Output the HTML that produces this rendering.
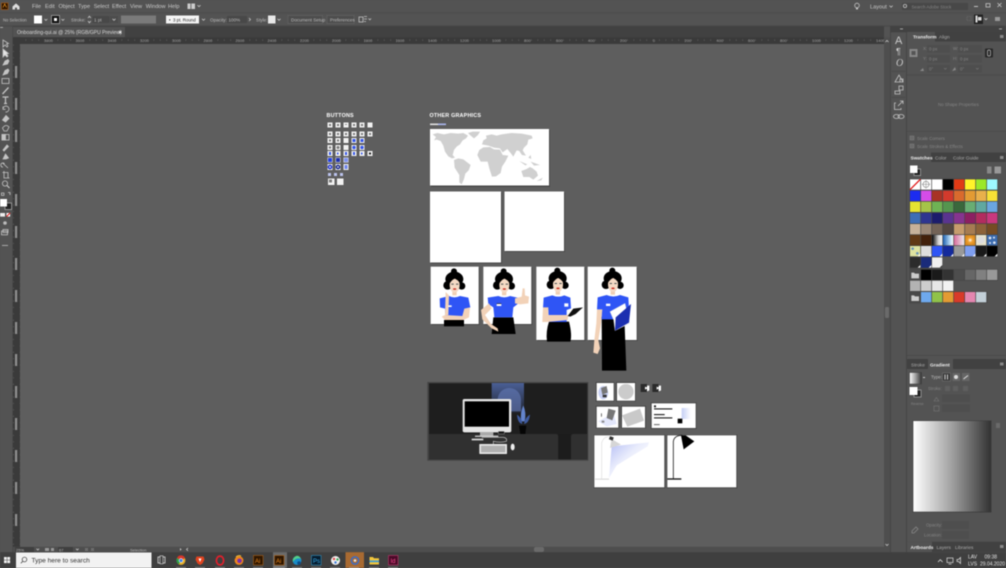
<!DOCTYPE html>
<html lang="en">
<head>
<meta charset="utf-8">
<title>Illustrator</title>
<style>
html,body{margin:0;padding:0;width:1006px;height:568px;overflow:hidden;background:#535353}
svg{display:block;position:absolute;left:0;top:0;filter:blur(.4px)}
text{font-family:"Liberation Sans",sans-serif}
.m{font-size:5.6px;fill:#c9c9c9}
.c{font-size:4.6px;fill:#bdbdbd}
.d{font-size:4.4px;fill:#858585}
.r{font-size:4px;fill:#a0a0a0}
.t{font-size:4.8px;fill:#aaa}
.ta{font-size:4.8px;fill:#eee;font-weight:bold}
.h{font-size:5.4px;fill:#fff;font-weight:bold;letter-spacing:.2px}
.i{fill:none;stroke:#c4c4c4;stroke-width:.8}
</style>
</head>
<body>
<svg width="1006" height="568" viewBox="0 0 1006 568" xmlns="http://www.w3.org/2000/svg">
<defs>
<pattern id="tk" width="6.4" height="6.8" patternUnits="userSpaceOnUse"><rect x="0" y="5.4" width=".5" height="1.4" fill="#6e6e6e"/></pattern>
<pattern id="vk" width="7" height="6.4" patternUnits="userSpaceOnUse"><rect x="5.6" y="0" width="1.4" height=".5" fill="#6e6e6e"/></pattern>
<linearGradient id="gr" x1="0" x2="1" y1="0" y2="0"><stop offset="0" stop-color="#fff"/><stop offset=".5" stop-color="#a0a0a0"/><stop offset="1" stop-color="#333"/></linearGradient>
<linearGradient id="bw" x1="0" x2="1" y1="0" y2="0"><stop offset="0" stop-color="#000"/><stop offset=".6" stop-color="#ccc"/><stop offset="1" stop-color="#fff"/></linearGradient>
<linearGradient id="bl" x1="0" x2="1" y1="0" y2="0"><stop offset="0" stop-color="#1c5fae"/><stop offset=".6" stop-color="#a6cdee"/><stop offset="1" stop-color="#fff"/></linearGradient>
<linearGradient id="pk" x1="0" x2="1" y1="0" y2="0"><stop offset="0" stop-color="#d86a9a"/><stop offset="1" stop-color="#eee"/></linearGradient>
<radialGradient id="or"><stop offset="0" stop-color="#fff"/><stop offset=".45" stop-color="#f0a030"/><stop offset="1" stop-color="#d88a20"/></radialGradient>
<linearGradient id="blu" x1="0" x2="0" y1="0" y2="1"><stop offset="0" stop-color="#4a5f96"/><stop offset="1" stop-color="#20242e"/></linearGradient>
<linearGradient id="beam" x1="0" x2=".75" y1="0" y2=".75"><stop offset="0" stop-color="#b4bdf4"/><stop offset=".55" stop-color="#e9ecfc"/><stop offset="1" stop-color="#fff"/></linearGradient>
<linearGradient id="pb" x1="0" x2="1" y1="0" y2="0"><stop offset="0" stop-color="#c5cff5"/><stop offset="1" stop-color="#fff"/></linearGradient>
<g id="head">
  <circle cx="-1" cy="-34" r="9" fill="#000"/>
  <ellipse cx="0" cy="-11" rx="27" ry="22" fill="#000"/>
  <circle cx="-20" cy="8" r="13" fill="#000"/>
  <circle cx="22" cy="10" r="11" fill="#000"/>
  <rect x="-6" y="20" width="13" height="18" fill="#f0cfb4"/>
  <ellipse cx="1" cy="7" rx="15" ry="23" fill="#f5dac4"/>
  <path d="M-14,2 Q-6,-10 2,-12 Q10,-8 16,0 L16,-16 L-10,-18Z" fill="#000"/>
  <rect x="-9" y="3" width="7" height="3" fill="#4a5252"/><rect x="5" y="3" width="7" height="3" fill="#4a5252"/>
  <ellipse cx="1" cy="19" rx="5" ry="2.4" fill="#c8281c"/>
</g>
<g id="mug"><rect x="0" y="0" width="19" height="24" fill="#2a2a2a"/><path d="M19,5 h7 v14 l-7,3z" fill="#fff"/><path d="M13,8 L22,12 L13,17Z" fill="#fff"/></g>
</defs>

<rect width="1006" height="568" fill="#535353"/>
<rect x="20" y="44" width="864" height="503" fill="#5e5e5e"/>

<!-- menu bar -->
<rect x="0" y="12.5" width="1006" height=".7" fill="#484848"/>
<rect x="1.5" y="3" width="6.5" height="6.5" fill="#2a1400" stroke="#b05a10" stroke-width=".6"/>
<path d="M3,7.5 L4.7,4 L6.5,7.5" fill="none" stroke="#f59a23" stroke-width=".7"/>
<path d="M12.5,6.5 L16,3.4 L19.5,6.5 V9.5 H17 V7.6 H15 V9.5 H12.5Z" fill="#ddd"/>
<text class="m" x="32" y="8">File</text><text class="m" x="45" y="8">Edit</text><text class="m" x="58.5" y="8">Object</text><text class="m" x="78" y="8">Type</text><text class="m" x="93.7" y="8">Select</text><text class="m" x="112" y="8">Effect</text><text class="m" x="130" y="8">View</text><text class="m" x="145.7" y="8">Window</text><text class="m" x="168" y="8">Help</text>
<rect x="187.5" y="3.5" width="7.5" height="5.5" fill="#ccc"/><rect x="190.5" y="3.5" width=".8" height="5.5" fill="#535353"/>
<path d="M197.5,5.2 l1.500,1.500 l1.500,-1.500" class="i"/>
<circle cx="857" cy="5.5" r="2.3" class="i"/><rect x="856" y="8" width="2" height="1.4" fill="#ccc"/>
<text class="m" x="870" y="8.3">Layout</text><path d="M889.5,5.6 l1.6,1.6 l1.6,-1.6" class="i"/>
<rect x="902" y="3" width="66" height="7" fill="#484848"/><circle cx="905" cy="6" r="1.6" class="i"/><text class="d" x="911.500" y="8.300">Search Adobe Stock</text>
<rect x="974" y="6" width="4" height=".9" fill="#ccc"/><rect x="986" y="3.6" width="4" height="3.4" class="i"/><path d="M997.500,3 l4,4 m0,-4 l-4,4" class="i"/>

<!-- control bar -->
<rect x="0" y="25.700" width="1006" height=".7" fill="#424242"/>
<text class="c" x="3" y="21.300" style="font-size:4.200px">No Selection</text>
<rect x="34" y="15.500" width="8" height="8" fill="#fff"/><path d="M44.500,19 l1.400,1.400 l1.400,-1.400" class="i"/>
<rect x="51.500" y="15.500" width="8" height="8" fill="#111" stroke="#ddd" stroke-width=".5"/><rect x="54" y="18" width="3" height="3" fill="#fff"/><path d="M61.500,19 l1.400,1.400 l1.400,-1.400" class="i"/>
<text class="c" x="71" y="21.300">Stroke:</text>
<path d="M88,18 l1.400,-1.800 l1.400,1.800 M88,21 l1.400,1.800 l1.400,-1.800" class="i"/>
<rect x="92.500" y="16" width="17" height="7" fill="#484848"/><text class="c" x="94" y="21.300">1 pt</text>
<rect x="110" y="16" width="8" height="7" fill="#4c4c4c"/><path d="M112.500,18.800 l1.500,1.500 l1.500,-1.500" class="i"/>
<rect x="121" y="15.500" width="35" height="8" fill="#7a7a7a"/>
<rect x="166" y="15.500" width="33" height="8" fill="#f4f4f4"/><text x="169" y="21.300" style="font-size:4.400px;fill:#222">•&#160;&#160;3 pt. Round</text>
<path d="M202,18.800 l1.500,1.500 l1.500,-1.500" class="i"/>
<text class="c" x="210" y="21.300">Opacity:</text>
<rect x="227" y="16" width="20" height="7" fill="#484848"/><text class="c" x="228.500" y="21.300">100%</text>
<path d="M249,18 l1.500,1.500 l-1.500,1.500" class="i"/>
<text class="c" x="256" y="21.300">Style:</text>
<rect x="268" y="15.500" width="7.500" height="8" fill="#e8e8e8"/><path d="M277.500,18.800 l1.500,1.500 l1.500,-1.500" class="i"/>
<rect x="288" y="15.500" width="34.500" height="8" fill="#4d4d4d" stroke="#6a6a6a" stroke-width=".5"/><text class="c" x="291" y="21.300">Document Setup</text>
<rect x="327" y="15.500" width="27" height="8" fill="#4d4d4d" stroke="#6a6a6a" stroke-width=".5"/><text class="c" x="330" y="21.300">Preferences</text>
<rect x="359" y="17" width="4" height="5" class="i"/><path d="M364,16.500 h3 M364,19 h3 M364,21.500 h2" class="i"/><path d="M368.500,18.500 l1.300,1.300 l1.300,-1.300" class="i"/>
<rect x="967" y="16.500" width="4" height="4" fill="none" stroke="#777" stroke-width=".6" stroke-dasharray="1 .8"/>
<rect x="974" y="14.500" width="9" height="9.500" fill="#222"/><rect x="975.500" y="15.500" width="2" height="7" fill="#ddd"/><rect x="978" y="17" width="3.500" height="3.500" fill="#ddd"/>
<path d="M984.500,18.300 l1.400,1.400 l1.400,-1.400" class="i"/>
<rect x="995" y="17" width="5" height="4" fill="#999"/>

<!-- tab bar -->
<rect x="13" y="26.400" width="871" height="10.800" fill="#414141"/>
<rect x="13" y="27" width="112" height="10.200" fill="#535353"/>
<text x="17" y="33.800" style="font-size:5px;fill:#d8d8d8">Onboarding-qui.ai @ 25% (RGB/GPU Preview)</text>
<path d="M119,31 l2.400,2.400 m0,-2.400 l-2.400,2.400" stroke="#eee" stroke-width=".9"/>

<!-- horizontal ruler -->
<rect x="13" y="37.200" width="871" height="6.800" fill="#3a3a3a"/>
<rect x="20" y="37.200" width="864" height="6.800" fill="url(#tk)"/>
<text class="r" x="44" y="42">3800</text><text class="r" x="75.500" y="42">3600</text><text class="r" x="107.500" y="42">3400</text><text class="r" x="140" y="42">3200</text><text class="r" x="172" y="42">3000</text><text class="r" x="203.500" y="42">2800</text><text class="r" x="235.500" y="42">2600</text><text class="r" x="267.500" y="42">2400</text><text class="r" x="300" y="42">2200</text><text class="r" x="332" y="42">2000</text><text class="r" x="363.500" y="42">1800</text><text class="r" x="395.500" y="42">1600</text><text class="r" x="428" y="42">1400</text><text class="r" x="460" y="42">1200</text><text class="r" x="492" y="42">1000</text><text class="r" x="524" y="42">800</text><text class="r" x="556" y="42">600</text><text class="r" x="588" y="42">400</text><text class="r" x="620" y="42">200</text><text class="r" x="652.700" y="42">0</text><text class="r" x="684.500" y="42">200</text><text class="r" x="716.500" y="42">400</text><text class="r" x="748" y="42">600</text><text class="r" x="780" y="42">800</text><text class="r" x="812" y="42">1000</text><text class="r" x="844" y="42">1200</text><text class="r" x="876" y="42">1400</text>
<!-- vertical ruler -->
<rect x="13" y="37.200" width="7" height="510" fill="#3a3a3a"/>
<rect x="13" y="44" width="7" height="503" fill="url(#vk)"/>
<g fill="#8f8f8f"><rect x="15" y="66" width="2.200" height="12"/><rect x="15" y="98" width="2.200" height="12"/><rect x="15" y="130" width="2.200" height="12"/><rect x="15" y="162" width="2.200" height="12"/><rect x="15" y="194" width="2.200" height="12"/><rect x="15" y="226" width="2.200" height="12"/><rect x="15" y="258" width="2.200" height="12"/><rect x="15" y="290" width="2.200" height="12"/><rect x="15" y="322" width="2.200" height="12"/><rect x="15" y="354" width="2.200" height="12"/><rect x="15" y="386" width="2.200" height="12"/><rect x="15" y="418" width="2.200" height="12"/><rect x="15" y="450" width="2.200" height="12"/><rect x="15" y="482" width="2.200" height="12"/><rect x="15" y="514" width="2.200" height="12"/></g>

<!-- left toolbar -->
<rect x="0" y="26.400" width="13" height="526" fill="#535353"/>
<rect x="12.400" y="26.400" width=".6" height="526" fill="#444"/>
<rect x="0" y="27" width="3" height=".8" fill="#bbb"/>
<g class="i">
<path d="M3,40 L3,47 L5,45 L7,47 L8,46 L6.500,44 L8.500,43.500Z"/>
<path d="M3,49 L3,57 L5,55 L7,57 L8,56 L6.500,54 L8.500,53.500Z" fill="#e6e6e6"/>
<path d="M3,65 L5,61 L8,59.500 L9,61 L7.500,64 L3,65Z" fill="#c4c4c4"/>
<path d="M3,75 L5,70.500 L8,69 L9,70.500 L7.500,73.500 L3,75Z" fill="#c4c4c4"/>
<rect x="2" y="78.500" width="7" height="5"/>
<path d="M2.500,94 L8.500,87.500" stroke-width="1.300"/>
<path d="M2.500,97 H8.500 M5.500,97 V103.500 M4,103.500 H7" stroke-width="1.200"/>
<path d="M3,109 A3,3 0 1 1 5.500,112 M3,106.500 V109.300 H5.500"/>
<path d="M2.500,120 L6,115.500 L9,118.500 L5.500,122Z" fill="#c4c4c4"/>
<path d="M2.500,128 Q6,123.500 9,127 L7,131 H4Z"/>
<rect x="2" y="134.500" width="7" height="5.500"/><rect x="2" y="134.500" width="3.500" height="5.500" fill="#c4c4c4"/>
<path d="M3,150 L7,145 L8.500,146.500 L4,151Z" fill="#c4c4c4"/>
<path d="M3,159 L5.500,154 L8.500,158 L6,159Z" fill="#c4c4c4"/>
<path d="M2.500,163 L8,168 M3,167 A2,2 0 1 1 4.500,164"/>
<path d="M4,171 V178 H9.500 M2.500,172.500 H8 V178"/>
<circle cx="5" cy="183.500" r="2.600"/><path d="M7,185.500 L9.500,188" stroke-width="1.200"/>
</g>
<path d="M1.500,193 h2.400 v2.400 h-2.400z" class="i" stroke-width=".6"/>
<path d="M8,192.500 h2 v2.500" class="i"/>
<rect x="5" y="203" width="6.500" height="6.500" fill="#222" stroke="#ddd" stroke-width=".5"/>
<rect x="0" y="199" width="7" height="7.500" fill="#fff"/>
<rect x="0" y="213" width="5" height="3.600" fill="#eee"/><rect x="6.500" y="213" width="3.600" height="3.600" fill="#fff"/><path d="M6.500,216.600 L10.100,213" stroke="#e01818" stroke-width="1"/>
<circle cx="5" cy="223" r="1.800" fill="#bbb"/>
<rect x="1.500" y="231" width="6" height="3.800" class="i"/><rect x="3" y="229.500" width="5" height="3" class="i"/>
<rect x="2" y="245" width="6" height=".9" fill="#b0b0b0"/>

<!-- scrollbars -->
<rect x="884" y="37.200" width="6" height="515" fill="#4e4e4e"/>
<path d="M885.500,42 l1.500,-1.500 l1.500,1.500" class="i" stroke-width=".6"/>
<rect x="885" y="307" width="4" height="11" rx="1.500" fill="#6a6a6a"/>
<path d="M885.500,544 l1.500,1.500 l1.500,-1.500" class="i" stroke-width=".6"/>
<rect x="13" y="546.800" width="877" height="5.500" fill="#4e4e4e"/>
<rect x="534" y="547" width="10" height="5" rx="2" fill="#6a6a6a"/>
<rect x="15" y="547" width="19" height="5" fill="#3f3f3f"/><text x="16" y="551.300" style="font-size:4px;fill:#bbb">25%</text>
<path d="M36.500,548.700 l1.300,1.300 l1.300,-1.300" class="i" stroke-width=".6"/>
<rect x="45" y="548" width="4" height="3" fill="#999"/><rect x="51" y="548" width="3" height="3" fill="#999"/>
<rect x="58" y="547" width="15" height="5" fill="#3f3f3f"/><text x="59" y="551.300" style="font-size:4px;fill:#bbb">67</text>
<path d="M76,548.700 l1.300,1.300 l1.300,-1.300" class="i" stroke-width=".6"/>
<rect x="85" y="548" width="3" height="3" fill="#6d6d6d"/><rect x="91" y="548" width="3" height="3" fill="#6d6d6d"/>
<text x="130" y="551.300" style="font-size:4px;fill:#bbb">Selection</text>
<path d="M180,548 l1.600,1.400 l-1.600,1.400z" fill="#ccc"/><path d="M188,548 l-1.500,1.400 l1.500,1.400" class="i" stroke-width=".5"/>

<!-- BUTTONS -->
<text class="h" x="326.500" y="117">BUTTONS</text>
<g fill="#f2f2f2">
<rect x="327.500" y="122.500" width="5" height="5"/><rect x="335.500" y="122.500" width="5" height="5"/><rect x="343.500" y="122.500" width="5" height="5"/><rect x="351.500" y="122.500" width="5" height="5"/><rect x="359.500" y="122.500" width="5" height="5"/><rect x="367.500" y="122.500" width="5" height="5"/>
<rect x="327.500" y="131.500" width="5" height="5"/><rect x="335.500" y="131.500" width="5" height="5"/><rect x="343.500" y="131.500" width="5" height="5"/><rect x="351.500" y="131.500" width="5" height="5"/><rect x="359.500" y="131.500" width="5" height="5"/><rect x="367.500" y="131.500" width="5" height="5"/>
<rect x="327.500" y="138" width="5" height="5"/><rect x="335.500" y="138" width="5" height="5"/><rect x="343.500" y="138" width="5" height="5"/><rect x="351.500" y="138" width="5" height="5"/><rect x="359.500" y="138" width="5" height="5"/>
<rect x="327.500" y="145" width="5" height="5"/><rect x="335.500" y="145" width="5" height="5"/><rect x="343.500" y="145" width="5" height="5"/><rect x="351.500" y="145" width="5" height="5"/><rect x="359.500" y="145" width="5" height="5"/>
<rect x="327.500" y="151" width="5" height="5"/><rect x="335.500" y="151" width="5" height="5"/><rect x="343.500" y="151" width="5" height="5"/><rect x="351.500" y="151" width="5" height="5"/><rect x="359.500" y="151" width="5" height="5"/><rect x="367.500" y="151" width="5" height="5"/>
<rect x="327.500" y="157.500" width="5" height="5"/><rect x="335.500" y="157.500" width="5" height="5"/><rect x="343.500" y="157.500" width="5" height="5"/>
<rect x="327.500" y="164" width="5" height="6"/><rect x="335.500" y="164" width="5" height="6"/><rect x="343.500" y="164" width="5" height="6"/>
<rect x="328" y="173" width="3" height="3" fill="#bcc4ee"/><rect x="334" y="173" width="3" height="3" fill="#bcc4ee"/><rect x="340" y="173" width="3" height="3" fill="#bcc4ee"/>
<rect x="328" y="178.500" width="6.500" height="6.500"/><rect x="337" y="178.500" width="6.500" height="6.500"/>
</g>
<g fill="#7a7a7a">
<rect x="329" y="124" width="2" height="2"/><rect x="337" y="124" width="2" height="2"/><rect x="345" y="124" width="2" height=".8"/><rect x="353" y="124" width="2" height="2"/><rect x="361" y="124" width="2" height="2"/>
<rect x="329" y="133" width="2" height="2"/><rect x="337" y="133" width="2" height="2"/><rect x="345" y="133" width="2" height="2"/><rect x="353" y="133" width="2" height="2"/><rect x="361" y="133" width="2" height="2"/><rect x="369" y="133" width="2" height="2"/>
<rect x="329" y="139.500" width="2" height="2"/><rect x="337" y="139.500" width="2" height="2"/>
<circle cx="330" cy="147.500" r="1.200"/><circle cx="338" cy="147.500" r="1.500"/>
<rect x="329" y="179.500" width="3" height="3"/>
</g>
<g fill="#3455e8">
<rect x="352.500" y="139" width="3" height="3"/><rect x="360.500" y="139" width="3" height="3"/>
<circle cx="354" cy="147.500" r="1.700"/><circle cx="362" cy="147.500" r="1.700"/>
<rect x="329" y="152" width="2" height="3"/><rect x="337" y="152.500" width="1.500" height="2"/><rect x="345" y="152" width="2" height="3"/><rect x="353" y="152" width="2" height="3"/><rect x="361" y="152.500" width="1.500" height="2"/>
<rect x="328" y="158" width="4" height="4" fill="#2340e0"/><rect x="336" y="158" width="4" height="4" fill="#1c2fb0"/><rect x="344" y="158" width="4" height="4" fill="#7f93ef"/>
<circle cx="330" cy="167" r="2.300" fill="#1c2fcc"/><circle cx="338" cy="167" r="2.300" fill="#101f88"/><rect x="344.500" y="165" width="3" height="4" fill="#6f86ee"/>
</g>
<rect x="369" y="152.500" width="2" height="2" fill="#222"/>
<circle cx="330" cy="167" r=".9" fill="#fff"/><circle cx="338" cy="167" r=".9" fill="#fff"/>

<!-- OTHER GRAPHICS -->
<text class="h" x="429.500" y="117">OTHER GRAPHICS</text>
<rect x="430" y="123.500" width="8" height="1.600" fill="#e0e0e0"/><rect x="438" y="123.500" width="8" height="1.600" fill="#aab6ee"/>

<!-- map + blanks -->
<rect x="431" y="130" width="119" height="57" fill="#3f3f3f" opacity=".7"/>
<rect x="430" y="129" width="119" height="56.500" fill="#fff"/>
<g transform="translate(320,105) scale(.3333)" fill="#d0d0d0">
<path d="M338,88 L352,84 L372,88 L392,84 L415,86 L430,84 L444,92 L438,100 L428,106 L420,118 L410,125 L402,135 L398,150 L405,158 L396,160 L385,154 L375,140 L370,122 L362,108 L350,104 L342,106 L348,96Z"/>
<path d="M444,84 L458,80 L480,80 L474,90 L462,100 L452,92Z"/>
<path d="M402,165 L415,160 L430,163 L452,180 L446,196 L436,206 L432,222 L425,238 L418,232 L418,210 L404,188Z"/>
<path d="M472,150 L478,135 L490,127 L510,126 L522,133 L540,134 L548,150 L565,152 L556,170 L546,185 L542,204 L528,214 L516,215 L508,190 L503,170 L482,170Z"/>
<path d="M486,118 L490,106 L500,100 L498,92 L515,88 L530,92 L545,88 L575,84 L605,86 L635,92 L638,100 L625,104 L622,118 L612,128 L608,136 L618,152 L606,150 L598,138 L590,136 L580,155 L572,144 L562,132 L548,142 L540,130 L522,128 L505,122Z"/>
<path d="M604,198 L620,192 L630,186 L638,190 L650,200 L654,212 L640,224 L628,216 L610,216Z"/>
<path d="M598,168 L622,178 L616,181Z M632,170 L660,180 L642,182Z M535,190 L542,188 L536,205Z M650,228 L668,218 L664,226Z M625,158 L632,150 L634,162Z"/>
</g>
<rect x="431" y="192.500" width="71" height="71" fill="#3f3f3f" opacity=".7"/><rect x="430" y="191.500" width="71" height="71" fill="#fff"/>
<rect x="505.500" y="192.500" width="59.500" height="59.500" fill="#3f3f3f" opacity=".7"/><rect x="504.500" y="191.500" width="59.500" height="59.500" fill="#fff"/>

<!-- characters -->
<g transform="translate(425,260) scale(.33333)">
<g fill="#3f3f3f" opacity=".7"><rect x="20" y="23" width="144" height="172"/><rect x="178" y="23" width="144" height="172"/><rect x="337" y="23" width="144" height="220"/><rect x="491" y="23" width="147" height="220"/></g>
<g fill="#fff"><rect x="17" y="20" width="144" height="172"/><rect x="175" y="20" width="144" height="172"/><rect x="334" y="20" width="144" height="220"/><rect x="488" y="20" width="147" height="220"/></g>
<!-- 1 -->
<rect x="57" y="180" width="60" height="19" fill="#000"/>
<path d="M44,115 L72,108 Q88,116 105,108 L130,113 L136,142 L118,148 L115,168 L60,168 L60,146 L45,142Z" fill="#2f55f5"/>
<path d="M118,146 L135,142 L132,172 L115,180 L60,180 L50,170 L60,165 L112,168Z" fill="#f2d2b8"/>
<path d="M62,96 L72,106 L70,165 L60,165Z" fill="#f2d2b8"/>
<rect x="70" y="136" width="10" height="5" fill="#fff"/>
<use href="#head" x="88" y="68"/>
<!-- 2 -->
<path d="M205,172 H265 L272,222 H200Z" fill="#000"/>
<path d="M188,113 L220,108 Q238,116 255,108 L282,114 L278,132 L265,142 L262,172 H208 L205,142 L190,132Z" fill="#2f55f5"/>
<path d="M192,130 L168,150 L172,178 L200,205 L220,215 L218,205 L198,192 L180,165 L200,145Z" fill="#f2d2b8"/>
<path d="M270,115 L290,110 L293,85 L299,85 L300,106 L312,110 L310,130 L285,133 L270,130Z" fill="#f2d2b8"/>
<rect x="215" y="132" width="14" height="6" fill="#fff"/><rect x="215" y="130" width="14" height="2" fill="#222"/>
<use href="#head" x="237" y="68"/>
<!-- 3 -->
<path d="M372,185 H432 Q442,225 436,245 H366 Q362,215 372,185Z" fill="#000"/>
<path d="M356,113 L382,106 Q400,114 418,106 L436,113 L438,145 L425,150 L425,186 H372 L370,150 L354,145Z" fill="#2f55f5"/>
<path d="M354,142 L370,142 L370,165 L405,165 L430,165 L428,180 L365,186 L352,186Z" fill="#f2d2b8"/>
<path d="M428,168 L445,146 L474,142 L452,162 L436,170Z" fill="#111"/>
<rect x="418" y="130" width="12" height="10" fill="#fff"/>
<use href="#head" x="398" y="66"/>
<!-- 4 -->
<path d="M530,170 H598 L604,332 H531Z" fill="#000"/>
<path d="M518,112 L545,105 Q565,114 585,105 L610,112 L612,145 L590,160 L590,178 L530,178 L530,150 L516,148Z" fill="#2f55f5"/>
<path d="M516,148 L532,148 L528,190 L520,240 L525,265 L518,282 L505,278 L508,240 L514,190Z" fill="#f2d2b8"/>
<path d="M555,155 L600,130 L614,190 L570,212 L566,180Z" fill="#fff" stroke="#ddd"/>
<path d="M572,172 L618,132 L612,188 L570,212Z" fill="#1c2fb0"/>
<rect x="543" y="131" width="13" height="7" fill="#fff"/>
<use href="#head" x="563" y="66"/>
</g>

<!-- desk panel -->
<g transform="translate(425,378) scale(.33333)">
<rect x="7" y="12" width="483" height="236" fill="#434343"/>
<rect x="12" y="16" width="475" height="228" fill="#1e1e1e"/>
<rect x="200" y="15" width="97" height="90" fill="url(#blu)"/>
<path d="M218,100 V65 A35,35 0 0 1 288,65 V100Z" fill="#5e74ae" opacity=".7"/>
<path d="M12,168 H392 Q400,168 400,176 V244 H12Z" fill="#303030"/>
<path d="M438,176 Q438,168 446,168 H487 V244 H438Z" fill="#303030"/>
<rect x="400" y="168" width="38" height="76" fill="#1c1c1c"/>
<path d="M295,82 Q305,105 299,130 H289 Q284,105 295,82Z" fill="#6484cc"/>
<path d="M276,110 Q290,118 292,138 Q278,136 276,110Z M315,110 Q300,118 297,138 Q312,136 315,110Z" fill="#3e5a9e"/>
<path d="M282,143 H304 L301,168 H286Z" fill="#050505"/>
<rect x="113" y="63" width="146" height="100" rx="5" fill="#e6e6e6"/>
<rect x="119" y="70" width="133" height="76" fill="#000"/>
<rect x="165" y="163" width="40" height="12" fill="#aaa"/>
<rect x="150" y="173" width="70" height="3.500" fill="#ddd"/>
<rect x="140" y="182" width="35" height="5" fill="#ddd"/>
<path d="M220,160 H238 V168 H220Z" fill="#111" stroke="#ccc"/>
<path d="M170,178 H235 Q248,180 244,190 Q225,195 205,190 V198" fill="none" stroke="#ccc" stroke-width="2"/>
<rect x="163" y="198" width="83" height="30" rx="2" fill="#e8e8e8"/>
<rect x="168" y="203" width="73" height="20" fill="#b0b0b0"/>
<ellipse cx="263" cy="207" rx="6" ry="10" fill="#eee"/>
<g fill="#3d3d3d" opacity=".7"><rect x="512" y="12" width="56" height="59"/><rect x="573" y="12" width="59" height="59"/><rect x="512" y="83" width="71" height="68"/><rect x="588" y="83" width="75" height="68"/><rect x="677" y="73" width="138" height="80"/><rect x="506" y="170" width="215" height="161"/><rect x="725" y="170" width="212" height="161"/></g>
<g fill="#fff"><rect x="515" y="15" width="51" height="53"/><rect x="576" y="15" width="54" height="53"/><rect x="515" y="86" width="65" height="63"/><rect x="591" y="86" width="69" height="63"/><rect x="680" y="76" width="132" height="74"/><rect x="508" y="172" width="210" height="156"/><rect x="727" y="172" width="207" height="156"/></g>
<ellipse cx="535" cy="44" rx="15" ry="20" fill="#c8d0f4"/>
<path d="M528,30 L545,24 L548,44 L532,50Z" fill="#777"/><rect x="533" y="50" width="12" height="8" fill="#333"/>
<circle cx="603" cy="41" r="23" fill="#cbcbcb"/>
<use href="#mug" x="647" y="18"/><use href="#mug" x="682" y="18"/>
<path d="M520,130 L545,145 L575,138 L565,105 Z" fill="#e3e7fb"/>
<path d="M550,92 L572,98 L562,127 L545,120Z" fill="#777"/>
<rect x="528" y="106" width="2.500" height="10" fill="#555"/><rect x="530" y="128" width="8" height="6" fill="#888"/>
<path d="M591,112 L645,92 L657,128 L607,146 Z" fill="#c9c9c9"/>
<rect x="687" y="82" width="6" height="6" fill="#222"/>
<rect x="687" y="91" width="55" height="3.500" fill="#222"/><rect x="687" y="108" width="32" height="3.500" fill="#222"/><rect x="687" y="118" width="55" height="3.500" fill="#222"/><rect x="687" y="138" width="17" height="3.500" fill="#777"/>
<rect x="770" y="90" width="28" height="33" fill="url(#pb)"/><rect x="758" y="122" width="14" height="14" fill="#000"/>
<!-- lamp 1 -->
<path d="M560,205 L672,193 L668,205 L575,262 L552,300 Z" fill="url(#beam)"/>
<path d="M555,210 L560,183 L588,200 Z" fill="#d6d6d6"/><rect x="553" y="176" width="12" height="10" fill="#333" transform="rotate(20 559 181)"/>
<path d="M530,302 V195 Q535,175 555,176" fill="none" stroke="#ddd" stroke-width="2"/>
<rect x="510" y="302" width="42" height="3" fill="#d5d5d5"/>
<!-- lamp 2 -->
<path d="M745,302 V190 Q748,172 772,172" fill="none" stroke="#222" stroke-width="2.500"/>
<path d="M768,172 L782,172 L808,190 L776,214Z" fill="#000"/>
<rect x="727" y="301" width="42" height="4" fill="#111"/>
</g>

<!-- right dock -->
<rect x="890" y="26.400" width="116" height="526" fill="#535353"/>
<rect x="890" y="26.400" width="1" height="526" fill="#464646"/>
<rect x="906" y="26.400" width="1" height="526" fill="#464646"/>
<rect x="890" y="26.400" width="116" height="6" fill="#424242"/>
<rect x="900" y="28.500" width="3" height=".8" fill="#bbb"/><rect x="999" y="28.500" width="3" height=".8" fill="#bbb"/>
<text x="895" y="44" style="font-size:11px;fill:#ccc">A</text>
<text x="896" y="54.500" style="font-size:9px;fill:#ccc">¶</text>
<text x="896" y="66" style="font-size:10px;fill:#ccc;font-style:italic;font-family:'Liberation Serif',serif">O</text>
<rect x="891.500" y="71" width="14" height=".7" fill="#464646"/>
<path d="M895,82 L899,75 L903,82Z M900,79 h3 v3 h-3z" class="i"/>
<path d="M895,94 h5 v-3 h-5z M899,90 h4 v-4 h-4z" class="i" fill="#aaa"/>
<rect x="891.500" y="97" width="14" height=".7" fill="#464646"/>
<path d="M896,103 h-1.500 v6.500 h6.500 v-1.500 M898,106 L903,101 M900,101 h3 v3" class="i"/>
<ellipse cx="896.500" cy="116.500" rx="3" ry="2" class="i"/><ellipse cx="901" cy="116.500" rx="3" ry="2" class="i"/>

<!-- transform panel -->
<rect x="907" y="32" width="99" height="9.500" fill="#414141"/>
<rect x="907" y="32" width="28" height="9.500" fill="#535353"/>
<text class="ta" x="913" y="38.700">Transform</text><text class="t" x="939" y="38.700">Align</text>
<rect x="1000" y="35" width="3.500" height="3" fill="#888"/>
<rect x="909.500" y="49" width="8" height="8" fill="#888"/><rect x="911.500" y="51" width="4" height="4" fill="#555"/>
<text class="d" x="923" y="50">X:</text><rect x="927" y="45" width="23" height="7.500" fill="#4e4e4e"/><text class="d" x="929" y="50.500">0 px</text>
<text class="d" x="953" y="50">W:</text><rect x="958" y="45" width="24" height="7.500" fill="#4e4e4e"/><text class="d" x="960" y="50.500">0 px</text>
<rect x="985" y="48.500" width="8" height="9" rx="1" fill="#282828"/><rect x="987.500" y="50" width="3" height="6" rx="1.400" fill="none" stroke="#bbb" stroke-width=".7"/>
<text class="d" x="923" y="60">Y:</text><rect x="927" y="55" width="23" height="7.500" fill="#4e4e4e"/><text class="d" x="929" y="60.500">0 px</text>
<text class="d" x="953" y="60">H:</text><rect x="958" y="55" width="24" height="7.500" fill="#4e4e4e"/><text class="d" x="960" y="60.500">0 px</text>
<path d="M920,71 h4 l-1,-3z" fill="#888"/><rect x="927" y="65" width="23" height="7.500" fill="#4e4e4e"/><text class="d" x="929" y="70.500">0°</text><path d="M944,68 l1.300,1.300 l1.300,-1.300" stroke="#777" fill="none" stroke-width=".6"/>
<path d="M952,71 l3,-4 l1,3z" fill="#888"/><rect x="958" y="65" width="24" height="7.500" fill="#4e4e4e"/><text class="d" x="960" y="70.500">0°</text><path d="M976,68 l1.300,1.300 l1.300,-1.300" stroke="#777" fill="none" stroke-width=".6"/>
<rect x="907" y="74.700" width="99" height=".7" fill="#484848"/>
<text class="d" x="938" y="106">No Shape Properties</text>
<rect x="907" y="131" width="99" height=".6" fill="#484848"/>
<rect x="910" y="136" width="4" height="4" fill="#6a6a6a" stroke="#888" stroke-width=".4"/><text class="d" x="917" y="140">Scale Corners</text>
<rect x="910" y="144" width="4" height="4" fill="#6a6a6a" stroke="#888" stroke-width=".4"/><text class="d" x="917" y="148">Scale Strokes &amp; Effects</text>

<!-- swatches panel -->
<rect x="907" y="152.500" width="99" height="9.500" fill="#414141"/>
<rect x="907" y="152.500" width="24" height="9.500" fill="#535353"/>
<text class="ta" x="910.500" y="159.300">Swatches</text><text class="t" x="935" y="159.300">Color</text><text class="t" x="953" y="159.300">Color Guide</text>
<rect x="1000" y="156" width="3.500" height="3" fill="#888"/>
<rect x="914" y="169" width="6.500" height="6.500" fill="#222" stroke="#ddd" stroke-width=".5"/>
<rect x="910" y="165.500" width="7.500" height="7.500" fill="#fff"/>
<rect x="987" y="166.500" width="4.500" height="7" fill="#888"/><rect x="994.500" y="166.500" width="6.500" height="7" fill="#999"/>

<g transform="translate(890,150) scale(.33333)">
<rect x="58" y="86" width="266" height="272" fill="#444"/>
<rect x="60" y="88" width="31" height="31" fill="#fff"/><path d="M60,119 L91,88" stroke="#e01818" stroke-width="4"/>
<rect x="93" y="88" width="31" height="31" fill="#fff"/><circle cx="108" cy="103" r="9" fill="none" stroke="#888" stroke-width="2"/><path d="M95,103 H121 M108,90 V116" stroke="#888" stroke-width="1.500"/>
<rect x="126" y="88" width="31" height="31" fill="#fff"/>
<rect x="159" y="88" width="31" height="31" fill="#000"/>
<rect x="192" y="88" width="31" height="31" fill="#e03a15"/>
<rect x="225" y="88" width="31" height="31" fill="#fff32a"/>
<rect x="258" y="88" width="31" height="31" fill="#9be82a"/>
<rect x="291" y="88" width="31" height="31" fill="#9ef8ff"/>
<rect x="60" y="122" width="31" height="31" fill="#1c2cf0"/><rect x="93" y="122" width="31" height="31" fill="#d54ce8"/><rect x="126" y="122" width="31" height="31" fill="#a83325"/><rect x="159" y="122" width="31" height="31" fill="#d23a2c"/><rect x="192" y="122" width="31" height="31" fill="#d96a2d"/><rect x="225" y="122" width="31" height="31" fill="#e39b33"/><rect x="258" y="122" width="31" height="31" fill="#e9b04b"/><rect x="291" y="122" width="31" height="31" fill="#f7e136"/>
<rect x="60" y="155" width="31" height="31" fill="#e6e232"/><rect x="93" y="155" width="31" height="31" fill="#a6c349"/><rect x="126" y="155" width="31" height="31" fill="#6fb254"/><rect x="159" y="155" width="31" height="31" fill="#55954f"/><rect x="192" y="155" width="31" height="31" fill="#3a683c"/><rect x="225" y="155" width="31" height="31" fill="#68ad73"/><rect x="258" y="155" width="31" height="31" fill="#60a8a0"/><rect x="291" y="155" width="31" height="31" fill="#6aa6e0"/>
<rect x="60" y="189" width="31" height="31" fill="#3e6db5"/><rect x="93" y="189" width="31" height="31" fill="#2e3590"/><rect x="126" y="189" width="31" height="31" fill="#1c1c6c"/><rect x="159" y="189" width="31" height="31" fill="#5a3490"/><rect x="192" y="189" width="31" height="31" fill="#86348f"/><rect x="225" y="189" width="31" height="31" fill="#8c1f62"/><rect x="258" y="189" width="31" height="31" fill="#b22c5f"/><rect x="291" y="189" width="31" height="31" fill="#c9387e"/>
<rect x="60" y="222" width="31" height="31" fill="#c7b299"/><rect x="93" y="222" width="31" height="31" fill="#998675"/><rect x="126" y="222" width="31" height="31" fill="#736357"/><rect x="159" y="222" width="31" height="31" fill="#534741"/><rect x="192" y="222" width="31" height="31" fill="#c69c6d"/><rect x="225" y="222" width="31" height="31" fill="#a67c52"/><rect x="258" y="222" width="31" height="31" fill="#8c6239"/><rect x="291" y="222" width="31" height="31" fill="#754c24"/>
<rect x="60" y="255" width="31" height="31" fill="#603813"/><rect x="93" y="255" width="31" height="31" fill="#42210b"/><rect x="126" y="255" width="31" height="31" fill="url(#bw)"/><rect x="159" y="255" width="31" height="31" fill="url(#bl)"/><rect x="192" y="255" width="31" height="31" fill="url(#pk)"/><rect x="225" y="255" width="31" height="31" fill="url(#or)"/><rect x="258" y="255" width="31" height="31" fill="#e8e4cc"/><circle cx="273" cy="270" r="11" fill="#ddd"/><rect x="291" y="255" width="31" height="31" fill="#3c6cb0"/><circle cx="300" cy="264" r="4" fill="#dfe8f5"/><circle cx="313" cy="278" r="4" fill="#dfe8f5"/><circle cx="312" cy="263" r="3" fill="#dfe8f5"/><circle cx="300" cy="279" r="3" fill="#dfe8f5"/>
<rect x="60" y="288" width="31" height="31" fill="#dfe3a0"/><circle cx="68" cy="296" r="4" fill="#6a94b8"/><circle cx="82" cy="310" r="4" fill="#6a94b8"/><rect x="93" y="288" width="31" height="31" fill="#ddd"/><rect x="126" y="288" width="31" height="31" fill="#2f55f5"/><rect x="159" y="288" width="31" height="31" fill="#142a9c"/><rect x="192" y="288" width="31" height="31" fill="#999"/><rect x="225" y="288" width="31" height="31" fill="#7f9ff0"/><rect x="258" y="288" width="31" height="31" fill="#1a1a1a"/><rect x="291" y="288" width="31" height="31" fill="#000"/>
<rect x="60" y="322" width="31" height="31" fill="#2b2b2b"/><rect x="93" y="322" width="31" height="31" fill="#1a2b7a"/><rect x="126" y="322" width="31" height="31" fill="#f0f0f0"/>
<rect x="158" y="320" width="166" height="38" fill="#535353"/>
<g fill="#fff"><path d="M91,319 l-8,0 l8,-8z M124,319 l-8,0 l8,-8z M157,319 l-8,0 l8,-8z M190,319 l-8,0 l8,-8z M223,319 l-8,0 l8,-8z M256,319 l-8,0 l8,-8z M289,319 l-8,0 l8,-8z M322,319 l-8,0 l8,-8z M91,353 l-8,0 l8,-8z M124,353 l-8,0 l8,-8z"/></g>
<path d="M157,353 l-8,0 l8,-8z" fill="#333"/>
<rect x="58" y="358" width="34" height="34" fill="#484848"/>
<path d="M64,368 h8 l3,3 h12 v14 h-23z" fill="#ccc"/>
<rect x="92" y="358" width="232" height="34" fill="#444"/>
<rect x="93" y="359" width="31" height="31" fill="#000"/><rect x="126" y="359" width="31" height="31" fill="#1a1a1a"/><rect x="159" y="359" width="31" height="31" fill="#333"/><rect x="192" y="359" width="31" height="31" fill="#4d4d4d"/><rect x="225" y="359" width="31" height="31" fill="#666"/><rect x="258" y="359" width="31" height="31" fill="#808080"/><rect x="291" y="359" width="31" height="31" fill="#999"/>
<rect x="58" y="391" width="134" height="34" fill="#444"/>
<rect x="60" y="392" width="31" height="31" fill="#b3b3b3"/><rect x="93" y="392" width="31" height="31" fill="#ccc"/><rect x="126" y="392" width="31" height="31" fill="#e6e6e6"/><rect x="159" y="392" width="31" height="31" fill="#f2f2f2"/>
<rect x="58" y="426" width="34" height="34" fill="#484848"/>
<path d="M64,436 h8 l3,3 h12 v14 h-23z" fill="#ccc"/>
<rect x="92" y="425" width="200" height="34" fill="#444"/>
<rect x="93" y="426" width="31" height="31" fill="#6ea9ee"/><rect x="126" y="426" width="31" height="31" fill="#90c24a"/><rect x="159" y="426" width="31" height="31" fill="#e39b33"/><rect x="192" y="426" width="31" height="31" fill="#d83a2a"/><rect x="225" y="426" width="31" height="31" fill="#e486b0"/><rect x="258" y="426" width="31" height="31" fill="#c3d0d8"/>
</g>
<rect x="907" y="355" width="99" height=".7" fill="#484848"/>

<!-- gradient panel -->
<rect x="907" y="359" width="99" height="10" fill="#414141"/>
<rect x="928" y="359" width="25" height="10" fill="#535353"/>
<text class="t" x="911" y="366.300">Stroke</text><text class="ta" x="930" y="366.300">Gradient</text>
<rect x="1000" y="362.500" width="3.500" height="3" fill="#888"/>
<rect x="909.500" y="372.500" width="12" height="11.500" fill="url(#gr)" stroke="#3a3a3a" stroke-width=".5"/>
<rect x="923" y="377" width="2" height="1" fill="#ccc"/>
<rect x="914" y="390" width="7" height="7" fill="#222" stroke="#ddd" stroke-width=".5"/>
<rect x="909.500" y="387" width="8" height="8" fill="#fff"/>
<text class="c" x="931" y="378.300">Type:</text>
<rect x="942.500" y="373" width="8" height="8" fill="#3a3a3a" stroke="#888" stroke-width=".4"/><rect x="944.500" y="374.500" width="1" height="5" fill="#ccc"/><rect x="947" y="374.500" width="1" height="5" fill="#ccc"/>
<rect x="952.500" y="373" width="7.500" height="8" fill="#666"/><circle cx="956" cy="377" r="2" fill="#ddd"/>
<rect x="962" y="373" width="7.500" height="8" fill="#666"/><path d="M963.500,379 l4.500,-3.500" stroke="#ddd"/>
<text class="d" x="928" y="390">Stroke:</text>
<rect x="945" y="386" width="5" height="5" fill="#5f5f5f"/><rect x="953" y="386" width="5" height="5" fill="#5f5f5f"/><rect x="963" y="386" width="5" height="5" fill="#5f5f5f"/>
<path d="M934,401 l2.400,-3.500 l2.400,3.500z" fill="none" stroke="#777" stroke-width=".6"/>
<rect x="942" y="394.500" width="28" height="7.500" fill="#4e4e4e"/>
<rect x="934" y="406" width="5" height="5" fill="none" stroke="#777" stroke-width=".6"/>
<rect x="942" y="404.500" width="28" height="7.500" fill="#4e4e4e"/>
<text class="d" x="911" y="405" style="font-size:3.400px">Reverse</text>
<rect x="912.500" y="420.500" width="79" height="92" fill="#3a3a3a"/>
<rect x="913.300" y="421" width="77.400" height="90.700" fill="url(#gr)"/>
<rect x="996" y="423" width="4" height="5" fill="#6a6a6a"/>
<path d="M912,531 l4,-4 l2,2 l-4,4 h-2z" fill="none" stroke="#888" stroke-width=".8"/>
<text class="d" x="926" y="526.500">Opacity:</text><rect x="942" y="521" width="27" height="8" fill="#4e4e4e"/>
<text class="d" x="924" y="536.500">Location:</text><rect x="942" y="531" width="27" height="8" fill="#4e4e4e"/>

<!-- artboards tabs -->
<rect x="907" y="541.700" width="99" height="10.300" fill="#414141"/>
<rect x="907" y="541.700" width="25" height="10.300" fill="#535353"/>
<text class="ta" x="910.500" y="548.800">Artboards</text><text class="t" x="936.500" y="548.800">Layers</text><text class="t" x="955" y="548.800">Libraries</text>
<rect x="1000" y="545" width="3.500" height="3" fill="#888"/>

<!-- taskbar -->
<rect x="0" y="552.200" width="1006" height="15.800" fill="#3f3f3f"/>
<g fill="#f2f2f2"><rect x="4" y="557" width="2.800" height="2.800"/><rect x="7.300" y="557" width="2.800" height="2.800"/><rect x="4" y="560.300" width="2.800" height="2.800"/><rect x="7.300" y="560.300" width="2.800" height="2.800"/></g>
<rect x="16" y="552.500" width="135.500" height="15.500" fill="#f2f2f2"/>
<circle cx="24.500" cy="559.500" r="2.300" fill="none" stroke="#333" stroke-width=".7"/><path d="M22.800,561.300 L20.800,563.300" stroke="#333" stroke-width=".7"/>
<text x="31.500" y="562.600" style="font-size:6.600px;fill:#333">Type here to search</text>
<rect x="158" y="557" width="7" height="6" fill="none" stroke="#ddd" stroke-width=".8"/><rect x="160" y="555.800" width="3" height="8" fill="#3f3f3f" stroke="#ddd" stroke-width=".6"/>
<circle cx="181" cy="560.500" r="4.400" fill="#e8b02a"/><path d="M181,560.500 L177,558 A4.400,4.400 0 0 1 185,558Z" fill="#d8362a"/><path d="M181,560.500 L178.800,564.300 A4.400,4.400 0 0 1 177,558Z" fill="#2e9e4a"/><circle cx="181" cy="560.500" r="1.900" fill="#3c7ee8" stroke="#fff" stroke-width=".6"/>
<path d="M196.500,556.500 h7 l1,3 l-2,4 l-2.500,1.500 l-2.500,-1.500 l-2,-4z" fill="#e0431f"/><path d="M198.500,558.500 h3 l-1.500,3.500z" fill="#fff"/>
<ellipse cx="220" cy="560.500" rx="3.600" ry="4.400" fill="none" stroke="#e2202c" stroke-width="1.700"/>
<circle cx="239" cy="560.500" r="4.400" fill="#f0861c"/><circle cx="239.500" cy="560.800" r="2.300" fill="#7a2fae"/><path d="M236,557 q2,-2 5,-1" stroke="#f5c23a" fill="none"/>
<rect x="253.500" y="555.500" width="9.500" height="9.500" fill="#2e1600" stroke="#c26a10" stroke-width=".5"/><text x="255" y="563" style="font-size:6px;fill:#f08a1c">Ai</text>
<rect x="273" y="552.200" width="14" height="15.800" fill="#6b6b6b"/>
<rect x="274.500" y="555.500" width="9.500" height="9.500" fill="#2e1600" stroke="#c26a10" stroke-width=".5"/><text x="276" y="563" style="font-size:6px;fill:#f08a1c">Ai</text>
<circle cx="297" cy="560.500" r="4.400" fill="#1a8cc8"/><path d="M293,562 q3,-5 8,-3 q-2,-4 -5,-3 q-4,2 -3,6z" fill="#53d08a"/><circle cx="299" cy="563" r="1.800" fill="#0c4d8a"/>
<rect x="311.500" y="555.500" width="9.500" height="9.500" fill="#071c2e" stroke="#2ca6e0" stroke-width=".5"/><text x="313" y="563" style="font-size:6px;fill:#36b0f0">Ps</text>
<circle cx="335.500" cy="560.500" r="4.500" fill="#efefef"/><circle cx="334" cy="559" r="1.200" fill="#e04848"/><circle cx="337.500" cy="559.500" r="1.200" fill="#38a858"/><circle cx="335.500" cy="562.500" r="1.200" fill="#3878d8"/>
<rect x="345.500" y="552.200" width="18.500" height="15.800" fill="#a86a32"/>
<circle cx="355" cy="560.500" r="3.600" fill="none" stroke="#3a6cc8" stroke-width="1.500"/><circle cx="355" cy="560.500" r="1.300" fill="#e8e8e8"/>
<path d="M369.500,557 h3.500 l1,1.200 h5 v6.300 h-9.500z" fill="#f3c73c"/><rect x="369.500" y="560.500" width="9.500" height="1.700" fill="#3a9ad8"/>
<rect x="388.500" y="555.500" width="9.500" height="9.500" fill="#4a0a28" stroke="#d83a78" stroke-width=".5"/><text x="390.500" y="563" style="font-size:6px;fill:#ff4f93">Id</text>
<g fill="#cfcfcf" opacity=".6"><rect x="176" y="567.200" width="10" height=".8"/><rect x="195" y="567.200" width="10" height=".8"/><rect x="215" y="567.200" width="10" height=".8"/><rect x="234" y="567.200" width="10" height=".8"/><rect x="253" y="567.200" width="10" height=".8"/><rect x="273" y="567.200" width="12" height=".8"/><rect x="292" y="567.200" width="10" height=".8"/><rect x="311" y="567.200" width="10" height=".8"/><rect x="330" y="567.200" width="10" height=".8"/><rect x="349" y="567.200" width="10" height=".8"/><rect x="369" y="567.200" width="10" height=".8"/><rect x="388" y="567.200" width="10" height=".8"/></g>
<path d="M938,562 l2.300,-2.300 l2.300,2.300" fill="none" stroke="#ddd" stroke-width=".8"/>
<rect x="947" y="558" width="6" height="4.500" fill="none" stroke="#ddd" stroke-width=".7"/><path d="M948.500,564 h3" stroke="#ddd" stroke-width=".7"/>
<path d="M957,559.500 h1.500 l2,-2 v6 l-2,-2 h-1.500z" fill="none" stroke="#ddd" stroke-width=".7"/>
<text x="968" y="558.500" style="font-size:5px;fill:#e4e4e4">LAV</text><text x="968" y="565.300" style="font-size:5px;fill:#e4e4e4">LVS</text>
<text x="984.500" y="558.500" style="font-size:5px;fill:#e4e4e4">09:38</text><text x="980" y="565.300" style="font-size:5px;fill:#e4e4e4">29.04.2020</text>
</svg>
</body>
</html>
